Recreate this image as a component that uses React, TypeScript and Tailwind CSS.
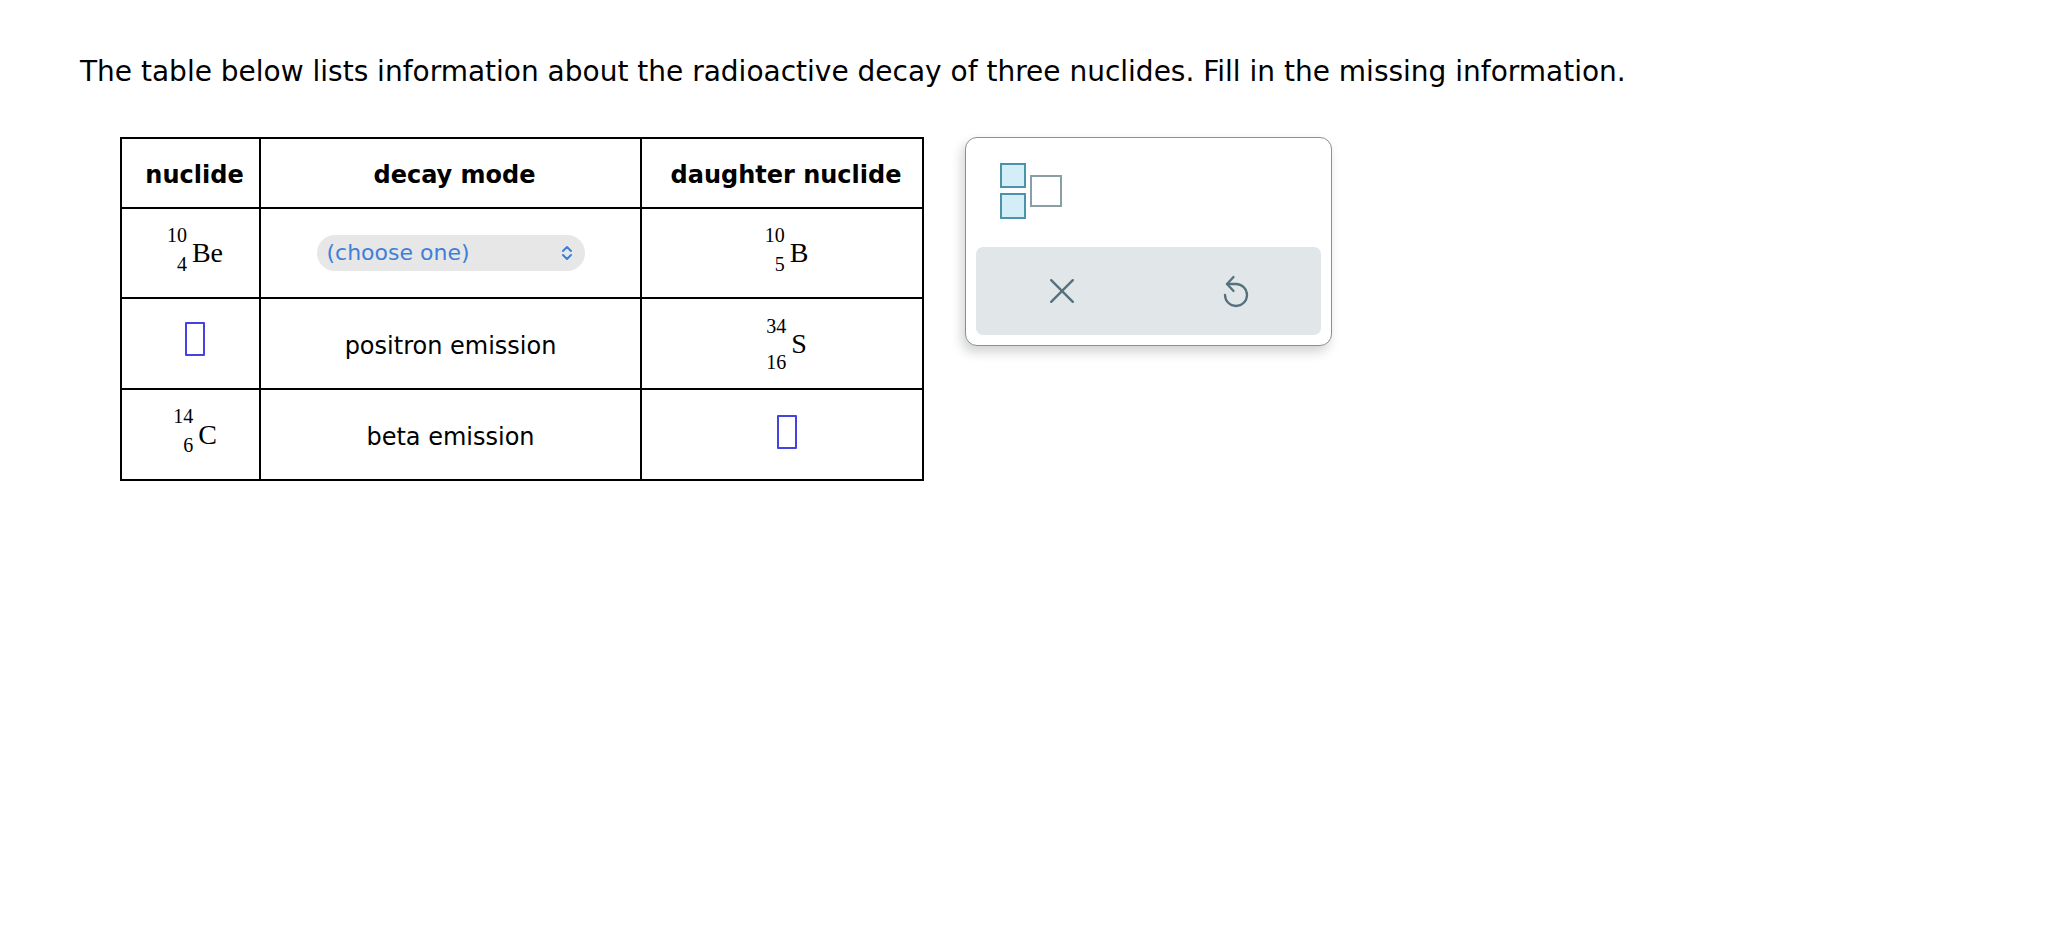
import React from "react";

const sans = { fontFamily: '"DejaVu Sans", Verdana, sans-serif' };

function Nuclide({ mass, z, sym, wide }: { mass: string; z: string; sym: string; wide?: boolean }) {
  return (
    <span className="inline-flex items-center align-middle font-['Liberation_Serif',serif] text-black">
      <span
        className={
          wide
            ? "flex flex-col items-end text-[20px] leading-[36px]"
            : "mb-[7px] flex flex-col items-end text-[20px] leading-[29px]"
        }
      >
        <span>{mass}</span>
        <span>{z}</span>
      </span>
      <span className="ml-[5px] text-[28px] leading-[28px]">{sym}</span>
    </span>
  );
}

function Blank({ raised }: { raised?: boolean }) {
  return (
    <span
      className={
        raised
          ? "mb-[10px] inline-block h-[34px] w-[20px] rounded-[1px] border-2 border-[#4343e0] align-middle"
          : "mb-[5px] inline-block h-[34px] w-[20px] rounded-[1px] border-2 border-[#4343e0] align-middle"
      }
    />
  );
}

function Dropdown() {
  return (
    <div className="mx-auto flex h-[36px] w-[268px] items-center justify-between rounded-full bg-[#e7e7e7] pl-[10px] pr-[11px]">
      <span className="text-[22px] leading-none text-[#3d7fd9]" style={sans}>(choose one)</span>
      <svg width="14" height="18" viewBox="0 0 14 18" fill="none" stroke="#3d7fd9" strokeWidth="2" strokeLinecap="round" strokeLinejoin="round">
        <path d="M3 7 L7 3 L11 7" />
        <path d="M3 11 L7 15 L11 11" />
      </svg>
    </div>
  );
}

export default function App() {
  const th = "border-2 border-black text-center font-bold text-[24px] h-[70px] p-0 pt-[3px] pl-[8px]";
  const td = "border-2 border-black text-center text-[24px] h-[91px] p-0";
  const tdSide = td + " pl-[9px]";
  const tdText = td + " pt-[5px]";
  return (
    <div className="min-h-[933px] w-full bg-white text-black" style={sans}>
      <div className="pl-[80px] pt-[55px] text-[28px] leading-[34px]">
        The table below lists information about the radioactive decay of three nuclides. Fill in the missing information.
      </div>
      <div className="ml-[120px] mt-[48px] flex items-start gap-[41px]">
        <table className="table-fixed border-collapse" style={{ width: 804 }}>
          <colgroup>
            <col style={{ width: 139 }} />
            <col style={{ width: 381 }} />
            <col style={{ width: 282 }} />
          </colgroup>
          <thead>
            <tr>
              <th className={th}>nuclide</th>
              <th className={th}>decay mode</th>
              <th className={th}>daughter nuclide</th>
            </tr>
          </thead>
          <tbody>
            <tr>
              <td className={tdSide + " !h-[90px]"}><Nuclide mass="10" z="4" sym="Be" /></td>
              <td className={td + " !h-[90px]"}><Dropdown /></td>
              <td className={tdSide + " !h-[90px]"}><Nuclide mass="10" z="5" sym="B" /></td>
            </tr>
            <tr>
              <td className={tdSide}><Blank raised /></td>
              <td className={tdText}>positron emission</td>
              <td className={tdSide}><Nuclide mass="34" z="16" sym="S" wide /></td>
            </tr>
            <tr>
              <td className={tdSide}><Nuclide mass="14" z="6" sym="C" /></td>
              <td className={tdText}>beta emission</td>
              <td className={tdSide}><Blank /></td>
            </tr>
          </tbody>
        </table>
        <div className="flex h-[209px] w-[367px] flex-col rounded-[12px] border-[1.5px] border-[#7f939b] bg-white p-[10px] shadow-[-3px_6px_12px_rgba(0,0,0,0.18)]">
          <div className="flex items-center gap-[4px] pl-[24px] pt-[15px]">
            <div className="flex flex-col gap-[5px]">
              <div className="h-[25px] w-[26px] border-2 border-[#4b93aa] bg-[#d3eef6]" />
              <div className="h-[26px] w-[26px] border-2 border-[#4b93aa] bg-[#d3eef6]" />
            </div>
            <div className="h-[32px] w-[32px] border-2 border-[#8c9ea5] bg-white" />
          </div>
          <div className="mt-auto flex h-[88px] rounded-[7px] bg-[#e1e6e9]">
            <div className="flex flex-1 items-center justify-center">
              <svg width="26" height="26" viewBox="0 0 24 24" fill="none" stroke="#56717e" strokeWidth="2.2" strokeLinecap="round">
                <path d="M2 2 L22 22" />
                <path d="M22 2 L2 22" />
              </svg>
            </div>
            <div className="flex flex-1 items-center justify-center">
              <svg width="30" height="36" viewBox="0 0 30 36" fill="none" stroke="#56717e" strokeWidth="2.3" strokeLinecap="round" strokeLinejoin="round">
                <path d="M5 22 A11 11 0 1 0 16 11 H7" />
                <path d="M13.5 4 L7 11 L13.5 18" />
              </svg>
            </div>
          </div>
        </div>
      </div>
    </div>
  );
}
